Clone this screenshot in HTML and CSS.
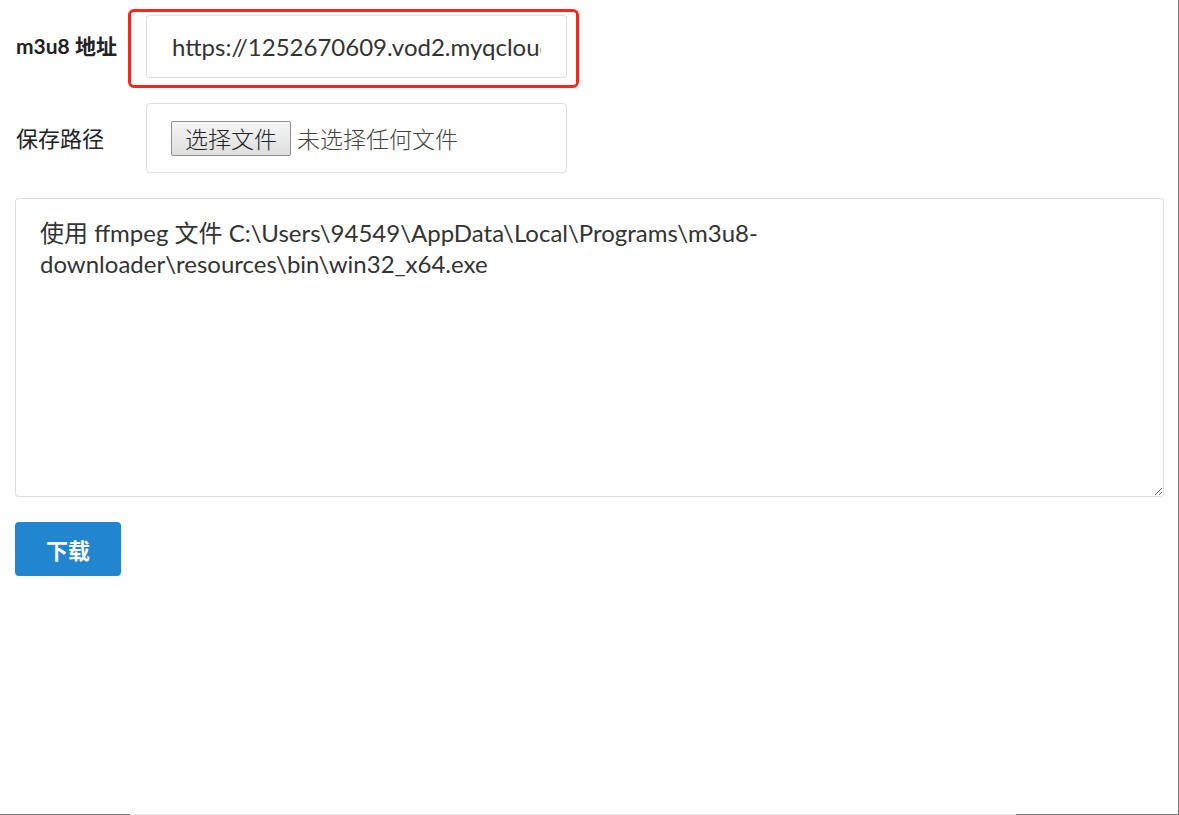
FILE: index.html
```html
<!DOCTYPE html>
<html>
<head>
    <meta charset="utf-8">
    <link rel="stylesheet" href="styles.css">
</head>
<body>
    <div class="window">
        <form class="form">
            <div class="field">
                <label class="field-label">m3u8 地址</label>
                <div class="url-box">
                    <input class="text-input" type="text" value="https://1252670609.vod2.myqcloud.com/e12fcf82vodtransgzp1252670609/playlist.m3u8">
                    <div class="highlight"></div>
                </div>
            </div>
            <div class="field">
                <label class="field-label plain">保存路径</label>
                <div class="file-box">
                    <span class="file-button">选择文件</span>
                    <span class="file-name">未选择任何文件</span>
                </div>
            </div>
            <textarea class="log">使用 ffmpeg 文件 C:\Users\94549\AppData\Local\Programs\m3u8-downloader\resources\bin\win32_x64.exe</textarea>
            <button class="primary-button" type="button">下载</button>
        </form>
        <div class="hbar"></div>
    </div>
</body>
</html>
```

FILE: styles.css
```css
html, body {
    margin: 0;
    background: #fff;
}

body {
    font-family: Lato, "Noto Sans CJK SC", sans-serif;
    color: rgba(0, 0, 0, 0.87);
    overflow: hidden;
}

.window {
    height: 815px;
    box-sizing: border-box;
    border-right: 1px solid #7a7a7a;
    display: flex;
    flex-direction: column;
}

.form {
    flex: 1;
    padding: 15px 14px 0 15px;
}

.field {
    display: flex;
    align-items: center;
    margin-bottom: 25px;
}

.field-label {
    width: 130px;
    font-size: 21px;
    font-weight: bold;
    color: #222;
    padding-left: 1px;
    margin-top: -3px;
}

.field-label.plain {
    font-weight: normal;
    font-size: 22px;
}

.url-box {
    position: relative;
}

.text-input {
    display: block;
    width: 421px;
    height: 63px;
    box-sizing: border-box;
    padding: 0 25px;
    border: 1px solid rgba(34, 36, 38, 0.15);
    border-radius: 4px;
    font-family: Lato, "Noto Sans CJK SC", sans-serif;
    font-size: 24px;
    color: #333;
    outline: none;
}

.highlight {
    position: absolute;
    left: -18px;
    top: -6px;
    right: -12px;
    bottom: -10px;
    border: 3px solid #ff2418;
    border-radius: 6px;
    pointer-events: none;
}

.file-box {
    width: 421px;
    height: 70px;
    box-sizing: border-box;
    padding: 0 24px;
    border: 1px solid rgba(34, 36, 38, 0.15);
    border-radius: 4px;
    display: flex;
    align-items: center;
    gap: 6px;
}

.file-button {
    display: inline-flex;
    align-items: center;
    justify-content: center;
    width: 120px;
    height: 35px;
    box-sizing: border-box;
    border: 1px solid #8f8f8f;
    border-radius: 2px;
    background: linear-gradient(#f6f6f6, #dedede);
    font-size: 23px;
    font-weight: 300;
    color: #222;
}

.file-name {
    font-size: 23px;
    font-weight: 300;
    color: #444;
}

.log {
    display: block;
    width: 1149px;
    height: 299px;
    box-sizing: border-box;
    margin: 0;
    padding: 18px 24px;
    border: 1px solid rgba(34, 36, 38, 0.15);
    border-radius: 4px;
    font-family: Lato, "Noto Sans CJK SC", sans-serif;
    font-size: 24px;
    line-height: 31px;
    color: #333;
    outline: none;
}

.primary-button {
    display: block;
    margin-top: 25px;
    width: 106px;
    height: 54px;
    border: none;
    border-radius: 4px;
    background: #2185d0;
    color: #fff;
    font-family: "Noto Sans CJK SC", sans-serif;
    font-size: 22px;
    font-weight: bold;
}

.hbar {
    height: 1px;
    background: linear-gradient(90deg, #777 0, #777 130px, #ededed 130px, #ededed 1016px, #777 1016px);
}
```
